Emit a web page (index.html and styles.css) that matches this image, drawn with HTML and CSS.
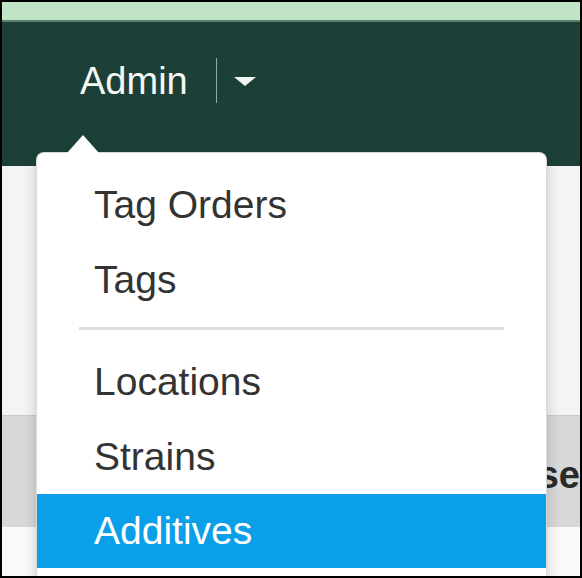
FILE: index.html
```html
<!DOCTYPE html>
<html>
<head>
<meta charset="utf-8">
<link rel="stylesheet" href="styles.css">
</head>
<body>
<div class="frame">
  <div class="topbar"></div>
  <nav class="nav">
    <div class="nav-item">
      <span class="nav-label">Admin</span>
      <span class="nav-sep"></span>
      <span class="nav-caret"></span>
    </div>
  </nav>
  <main class="content">
    <div class="upper"></div>
    <div class="band"><span class="band-text">Purchase</span></div>
    <div class="lower"></div>
  </main>
  <ul class="dropdown">
    <li class="item">Tag Orders</li>
    <li class="item">Tags</li>
    <li class="divider"></li>
    <li class="item">Locations</li>
    <li class="item">Strains</li>
    <li class="item active">Additives</li>
  </ul>
</div>
</body>
</html>
```

FILE: styles.css
```css
* { box-sizing: border-box; }
html, body { margin: 0; padding: 0; }
body {
  font-family: "Liberation Sans", Arial, Helvetica, sans-serif;
  background: #000;
}
.frame {
  position: relative;
  width: 582px;
  height: 578px;
  border: 2px solid #000;
  overflow: hidden;
  display: flex;
  flex-direction: column;
  background: #f6f6f6;
}
.topbar {
  height: 20px;
  flex: none;
  background: #c1e3c6;
  border-bottom: 2px solid #5d7f6e;
}
.nav {
  height: 144px;
  flex: none;
  background: #1c4038;
  display: flex;
  align-items: flex-start;
  padding: 36px 0 0 78px;
}
.nav-item {
  display: flex;
  align-items: center;
  color: #f4f8f5;
}
.nav-label {
  font-size: 38px;
  line-height: 44px;
}
.nav-sep {
  width: 1px;
  height: 45px;
  background: rgba(255,255,255,0.55);
  margin-left: 28px;
}
.nav-caret {
  width: 0;
  height: 0;
  border-left: 11px solid transparent;
  border-right: 11px solid transparent;
  border-top: 9px solid #eef4f0;
  margin-left: 17px;
  margin-top: 2px;
}
.content {
  flex: 1;
  display: flex;
  flex-direction: column;
}
.upper {
  height: 249px;
  background: #f4f4f4;
}
.band {
  height: 112px;
  background: #d8d8d8;
  border-top: 1px solid #c9c9c9;
  display: flex;
  justify-content: flex-end;
  align-items: center;
  padding-top: 8px;
  overflow: hidden;
}
.band-text {
  font-weight: bold;
  font-size: 38px;
  color: #2a2a2a;
  white-space: nowrap;
}
.lower {
  flex: 1;
  background: #fafafa;
}
.dropdown {
  position: absolute;
  left: 34px;
  top: 150px;
  width: 511px;
  margin: 0;
  padding: 14px 0 20px;
  list-style: none;
  background: #fff;
  border: 1px solid rgba(0,0,0,0.15);
  border-radius: 8px 8px 0 0;
  box-shadow: 0 6px 14px rgba(0,0,0,0.18);
}
.dropdown::before {
  content: "";
  position: absolute;
  left: 30px;
  top: -18px;
  border-left: 16px solid transparent;
  border-right: 16px solid transparent;
  border-bottom: 18px solid #fff;
}
.item {
  height: 75px;
  line-height: 75px;
  padding-left: 57px;
  font-size: 39px;
  color: #333;
  white-space: nowrap;
}
.item.active {
  background: #0a9fe8;
  color: #fff;
  height: 74px;
  line-height: 74px;
}
.divider {
  height: 3px;
  margin: 10px 42px 14px 42px;
  background: #dddddd;
}
```
